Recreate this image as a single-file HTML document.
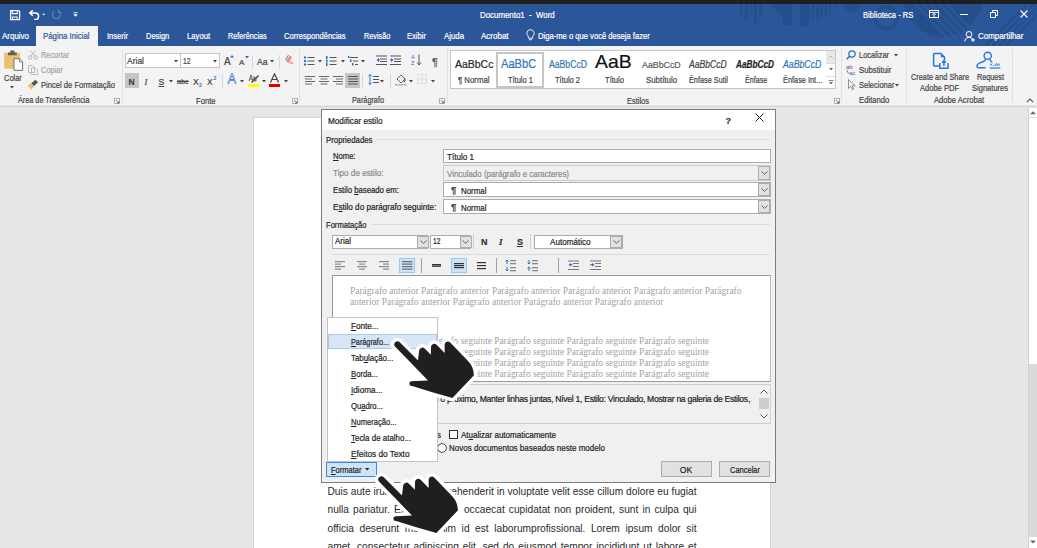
<!DOCTYPE html>
<html><head><meta charset="utf-8"><style>
html,body{margin:0;padding:0;width:1037px;height:548px;overflow:hidden;background:#e6e6e6;}
.t{position:absolute;white-space:nowrap;line-height:1;-webkit-text-stroke:0.2px currentColor;}
.r{position:absolute;}
u{text-decoration:underline;text-underline-offset:1px;}
</style></head><body>
<div class="r" style="left:0px;top:0px;width:1037px;height:4px;background:#1f1f1f;"></div>
<div class="r" style="left:0px;top:4px;width:1037px;height:42px;background:#2b579a;"></div>
<svg class="r" style="left:720px;top:4px;" width="317" height="42" viewBox="0 0 317 42">
<g fill="#254e8d">
<rect x="20" y="0" width="2.5" height="10"/><rect x="24.7" y="0" width="3" height="15"/><rect x="30" y="0" width="1.6" height="10.7"/>
<rect x="34" y="0" width="3" height="20.7"/><rect x="39" y="0" width="2.7" height="13.7"/>
<path d="M51.7 0 L63 0 L63 21.5 L71.8 21.5 L71.8 0 L63 0 L63 14 Z"/>
<rect x="79.5" y="0" width="10" height="22.5" rx="4"/>
<path d="M91.8 0 h2.2 v17 h-2.2z M96.4 0 h2.4 v16 h-2.4z M100 0 h2.6 v14 h-2.6z M105 0 h2 v12 h-2z M109.6 0 h1.4 v10 h-1.4z M114 0 h1.7 v6 h-1.7z"/>
<circle cx="132" cy="-2" r="9.6"/>
</g>
<g fill="none" stroke="#254e8d" stroke-width="4">
<circle cx="166" cy="13.7" r="11"/>
</g>
<circle cx="223" cy="-7" r="40" fill="#254e8d"/>
<g stroke="#2d5b9f" stroke-width="1.6">
<path d="M195 0 L235 42 M203 0 L243 42 M211 0 L251 42 M219 0 L259 42 M227 0 L267 42"/>
</g>
<g stroke="#254e8d" stroke-width="2.2">
<path d="M265 42 L307 0 M272 42 L314 0 M279 42 L321 0 M286 42 L328 0"/>
</g>
</svg>
<svg class="r" style="left:9px;top:9px;" width="12" height="12" viewBox="0 0 12 12"><path d="M1.6 1.6 h8.2 l0.8 0.8 v8.2 h-9z" fill="none" stroke="#fff" stroke-width="1.3" stroke-linejoin="round"/><path d="M3.3 1.6 v3 h5 v-3 M3.6 10.6 v-2.6 h4.6 v2.6" fill="none" stroke="#fff" stroke-width="1.1"/></svg>
<svg class="r" style="left:28px;top:9px;" width="18" height="11" viewBox="0 0 18 11"><path d="M2.3 4 h5 a3.3 3.3 0 0 1 0 6.6 h-1.2 M4.8 1.2 L1.8 4 L4.8 6.8" fill="none" stroke="#fff" stroke-width="1.5"/><path d="M14.3 4.8 h3 l-1.5 1.7z" fill="#fff"/></svg>
<svg class="r" style="left:51px;top:9px;" width="11" height="11" viewBox="0 0 11 11"><path d="M3 2.5 a4 4 0 1 0 5 0 M7.5 0.5 v3 h3" fill="none" stroke="#5f84bb" stroke-width="1.2"/></svg>
<svg class="r" style="left:72px;top:11px;" width="7" height="7" viewBox="0 0 7 7"><rect x="1.5" y="1.3" width="4" height="0.9" fill="#fff"/><path d="M1.3 3.3 h4.4 l-2.2 2.4z" fill="#fff"/></svg>
<div class="t" style="top:11.02px;font-size:8.6px;color:#fff;font-weight:normal;font-family:'Liberation Sans',sans-serif;transform:scaleX(0.9164);transform-origin:0 0;left:479.70px;">Documento1 &nbsp;- &nbsp;Word</div>
<div class="t" style="top:10.82px;font-size:8.6px;color:#fff;font-weight:normal;font-family:'Liberation Sans',sans-serif;transform:scaleX(0.8866);transform-origin:0 0;left:862.50px;">Biblioteca - RS</div>
<svg class="r" style="left:929px;top:10px;" width="10" height="8" viewBox="0 0 10 8"><rect x="0.5" y="0.5" width="9" height="7" fill="none" stroke="#fff"/><path d="M0.5 2.5 h9 M5 7 v-3.5 M3.3 5 L5 3.3 L6.7 5" fill="none" stroke="#fff" stroke-width="0.9"/></svg>
<div class="r" style="left:960px;top:13.5px;width:8px;height:1px;background:#fff;"></div>
<svg class="r" style="left:990px;top:10px;" width="8" height="8" viewBox="0 0 8 8"><path d="M0.5 2.5 h5 v5 h-5z M2.5 2.5 v-2 h5 v5 h-2" fill="none" stroke="#fff"/></svg>
<svg class="r" style="left:1020px;top:10px;" width="8" height="8" viewBox="0 0 8 8"><path d="M0.5 0.5 L7.5 7.5 M7.5 0.5 L0.5 7.5" stroke="#fff" stroke-width="1.1"/></svg>
<div class="r" style="left:36px;top:26px;width:62px;height:20px;background:#f3f3f3;"></div>
<div class="t" style="top:32.22px;font-size:8.6px;color:#fff;font-weight:normal;font-family:'Liberation Sans',sans-serif;transform:scaleX(0.9265);transform-origin:0 0;left:1.50px;">Arquivo</div>
<div class="t" style="top:32.22px;font-size:8.6px;color:#2b579a;font-weight:normal;font-family:'Liberation Sans',sans-serif;transform:scaleX(0.9095);transform-origin:0 0;left:42.80px;">Página Inicial</div>
<div class="t" style="top:32.22px;font-size:8.6px;color:#fff;font-weight:normal;font-family:'Liberation Sans',sans-serif;transform:scaleX(0.8790);transform-origin:0 0;left:106.70px;">Inserir</div>
<div class="t" style="top:32.22px;font-size:8.6px;color:#fff;font-weight:normal;font-family:'Liberation Sans',sans-serif;transform:scaleX(0.8668);transform-origin:0 0;left:145.50px;">Design</div>
<div class="t" style="top:32.22px;font-size:8.6px;color:#fff;font-weight:normal;font-family:'Liberation Sans',sans-serif;transform:scaleX(0.8988);transform-origin:0 0;left:186.80px;">Layout</div>
<div class="t" style="top:32.22px;font-size:8.6px;color:#fff;font-weight:normal;font-family:'Liberation Sans',sans-serif;transform:scaleX(0.8439);transform-origin:0 0;left:227.70px;">Referências</div>
<div class="t" style="top:32.22px;font-size:8.6px;color:#fff;font-weight:normal;font-family:'Liberation Sans',sans-serif;transform:scaleX(0.8832);transform-origin:0 0;left:284.40px;">Correspondências</div>
<div class="t" style="top:32.22px;font-size:8.6px;color:#fff;font-weight:normal;font-family:'Liberation Sans',sans-serif;transform:scaleX(0.8435);transform-origin:0 0;left:363.80px;">Revisão</div>
<div class="t" style="top:32.22px;font-size:8.6px;color:#fff;font-weight:normal;font-family:'Liberation Sans',sans-serif;transform:scaleX(0.8837);transform-origin:0 0;left:407.30px;">Exibir</div>
<div class="t" style="top:32.22px;font-size:8.6px;color:#fff;font-weight:normal;font-family:'Liberation Sans',sans-serif;transform:scaleX(0.9097);transform-origin:0 0;left:444.00px;">Ajuda</div>
<div class="t" style="top:32.22px;font-size:8.6px;color:#fff;font-weight:normal;font-family:'Liberation Sans',sans-serif;transform:scaleX(0.9316);transform-origin:0 0;left:481.40px;">Acrobat</div>
<div class="t" style="top:32.22px;font-size:8.6px;color:#fff;font-weight:normal;font-family:'Liberation Sans',sans-serif;transform:scaleX(0.8864);transform-origin:0 0;left:538.20px;">Diga-me o que você deseja fazer</div>
<svg class="r" style="left:526px;top:29px;" width="9" height="12" viewBox="0 0 9 12"><path d="M4.5 0.7 a3.6 3.6 0 0 0 -2.2 6.5 v2 h4.4 v-2 a3.6 3.6 0 0 0 -2.2 -6.5z M3 10.7 h3" fill="none" stroke="#fff" stroke-width="0.9"/></svg>
<svg class="r" style="left:964px;top:31px;" width="12" height="11" viewBox="0 0 12 11"><circle cx="5" cy="3.3" r="2.8" fill="none" stroke="#fff"/><path d="M0.6 10.5 a4.5 4.5 0 0 1 8.6 -1.5 M9 7 v4 M7 9 h4" fill="none" stroke="#fff"/></svg>
<div class="t" style="top:32.02px;font-size:8.6px;color:#fff;font-weight:normal;font-family:'Liberation Sans',sans-serif;transform:scaleX(0.9227);transform-origin:0 0;left:978.00px;">Compartilhar</div>
<div class="r" style="left:0px;top:46px;width:1037px;height:60px;background:#f3f3f3;"></div>
<div class="r" style="left:0px;top:105px;width:1037px;height:1px;background:#e6e6e6;"></div>
<div class="r" style="left:0px;top:106px;width:1037px;height:1px;background:#d5d5d5;"></div>
<div class="r" style="left:122px;top:49px;width:1px;height:53px;background:#e1e1e1;"></div>
<div class="r" style="left:299px;top:49px;width:1px;height:53px;background:#e1e1e1;"></div>
<div class="r" style="left:447px;top:49px;width:1px;height:53px;background:#e1e1e1;"></div>
<div class="r" style="left:841px;top:49px;width:1px;height:53px;background:#e1e1e1;"></div>
<div class="r" style="left:906px;top:49px;width:1px;height:53px;background:#e1e1e1;"></div>
<div class="r" style="left:1012px;top:49px;width:1px;height:53px;background:#e1e1e1;"></div>
<svg class="r" style="left:114px;top:97.5px;" width="6" height="6" viewBox="0 0 6 6"><path d="M0.5 5.5 v-5 h5 v5z" fill="none" stroke="#9a9a9a" stroke-width="0.8"/><path d="M2 2 L5 5 M5 3 v2 h-2" fill="none" stroke="#666" stroke-width="0.8"/></svg>
<svg class="r" style="left:292px;top:97.5px;" width="6" height="6" viewBox="0 0 6 6"><path d="M0.5 5.5 v-5 h5 v5z" fill="none" stroke="#9a9a9a" stroke-width="0.8"/><path d="M2 2 L5 5 M5 3 v2 h-2" fill="none" stroke="#666" stroke-width="0.8"/></svg>
<svg class="r" style="left:438.5px;top:97.5px;" width="6" height="6" viewBox="0 0 6 6"><path d="M0.5 5.5 v-5 h5 v5z" fill="none" stroke="#9a9a9a" stroke-width="0.8"/><path d="M2 2 L5 5 M5 3 v2 h-2" fill="none" stroke="#666" stroke-width="0.8"/></svg>
<svg class="r" style="left:833.5px;top:97.5px;" width="6" height="6" viewBox="0 0 6 6"><path d="M0.5 5.5 v-5 h5 v5z" fill="none" stroke="#9a9a9a" stroke-width="0.8"/><path d="M2 2 L5 5 M5 3 v2 h-2" fill="none" stroke="#666" stroke-width="0.8"/></svg>
<svg class="r" style="left:3px;top:49px;" width="22" height="23" viewBox="0 0 22 23"><rect x="1.2" y="3.7" width="15.9" height="15.9" fill="#e8c070"/><path d="M5 3.4 h8.8 v2.8 h-8.8z M7.3 1.6 h4.2 v2 h-4.2z" fill="#5f5f5f"/><path d="M10.9 9.7 h5.6 l3.1 3.1 v8.5 h-8.7z" fill="#fff" stroke="#707070" stroke-width="1"/><path d="M16.3 9.7 v3.2 h3.2" fill="none" stroke="#707070" stroke-width="0.8"/></svg>
<div class="t" style="top:73.62px;font-size:8.6px;color:#444444;font-weight:normal;font-family:'Liberation Sans',sans-serif;transform:scaleX(0.8663);transform-origin:0 0;left:3.50px;">Colar</div>
<svg class="r" style="left:10px;top:86.4px;" width="5" height="3" viewBox="0 0 5 3"><path d="M0 0 h4 l-2 2.4z" fill="#444"/></svg>
<svg class="r" style="left:28px;top:50px;" width="10" height="10" viewBox="0 0 10 10"><circle cx="2.2" cy="7.5" r="1.7" fill="none" stroke="#b5b5b5"/><circle cx="7.8" cy="7.5" r="1.7" fill="none" stroke="#b5b5b5"/><path d="M2.8 6 L8 0.5 M7.2 6 L2 0.5" stroke="#b5b5b5"/></svg>
<div class="t" style="top:51.12px;font-size:8.6px;color:#a6a6a6;font-weight:normal;font-family:'Liberation Sans',sans-serif;transform:scaleX(0.8588);transform-origin:0 0;left:40.70px;">Recortar</div>
<svg class="r" style="left:28px;top:65px;" width="10" height="10" viewBox="0 0 10 10"><path d="M0.5 0.5 h4 l2 2 v5 h-6z M3.5 3 h4 l2 2 v4.5 h-6z" fill="#f1f1f1" stroke="#b5b5b5" stroke-width="0.9"/></svg>
<div class="t" style="top:66.22px;font-size:8.6px;color:#a6a6a6;font-weight:normal;font-family:'Liberation Sans',sans-serif;transform:scaleX(0.8686);transform-origin:0 0;left:40.70px;">Copiar</div>
<svg class="r" style="left:27px;top:79px;" width="12" height="11" viewBox="0 0 12 11"><path d="M0.5 7 L4.5 10.5 L7.3 7.3 L3.6 4z" fill="#e8c070"/><path d="M4.3 4.3 L8.5 0.8 L11 3.3 L7.2 7z" fill="#555"/></svg>
<div class="t" style="top:81.22px;font-size:8.6px;color:#444444;font-weight:normal;font-family:'Liberation Sans',sans-serif;transform:scaleX(0.8852);transform-origin:0 0;left:40.70px;">Pincel de Formatação</div>
<div class="t" style="top:96.22px;font-size:8.6px;color:#444444;font-weight:normal;font-family:'Liberation Sans',sans-serif;transform:scaleX(0.8455);transform-origin:0 0;left:17.50px;">Área de Transferência</div>
<div class="r" style="left:125px;top:53px;width:56px;height:15px;background:#fff;box-sizing:border-box;border:1px solid #c6c6c6;"></div>
<div class="r" style="left:180px;top:53px;width:40px;height:15px;background:#fff;box-sizing:border-box;border:1px solid #c6c6c6;"></div>
<div class="t" style="top:56.82px;font-size:8.6px;color:#444;font-weight:normal;font-family:'Liberation Sans',sans-serif;transform:scaleX(0.9882);transform-origin:0 0;left:127.30px;">Arial</div>
<div class="t" style="top:56.82px;font-size:8.6px;color:#444;font-weight:normal;font-family:'Liberation Sans',sans-serif;transform:scaleX(0.7843);transform-origin:0 0;left:182.80px;">12</div>
<svg class="r" style="left:173.6px;top:59.5px;" width="5" height="3" viewBox="0 0 5 3"><path d="M0 0 h4 l-2 2.4z" fill="#444"/></svg>
<svg class="r" style="left:213px;top:59.5px;" width="5" height="3" viewBox="0 0 5 3"><path d="M0 0 h4 l-2 2.4z" fill="#444"/></svg>
<div class="t" style="top:57.44px;font-size:10px;color:#444;font-weight:normal;font-family:'Liberation Sans',sans-serif;left:224.00px;">A</div>
<svg class="r" style="left:230px;top:55px;" width="4" height="3" viewBox="0 0 4 3"><path d="M0 2.5 L2 0 L4 2.5z" fill="#2b6cc4"/></svg>
<div class="t" style="top:59.13px;font-size:8px;color:#444;font-weight:normal;font-family:'Liberation Sans',sans-serif;left:239.00px;">A</div>
<svg class="r" style="left:245px;top:56px;" width="4" height="3" viewBox="0 0 4 3"><path d="M0 0 L2 2.5 L4 0z" fill="#2b6cc4"/></svg>
<div class="r" style="left:252px;top:55px;width:1px;height:13px;background:#d5d5d5;"></div>
<div class="t" style="top:58.20px;font-size:8.5px;color:#444;font-weight:normal;font-family:'Liberation Sans',sans-serif;transform:scaleX(1.0186);transform-origin:0 0;left:257.00px;">Aa</div>
<svg class="r" style="left:269.6px;top:60px;" width="5" height="3" viewBox="0 0 5 3"><path d="M0 0 h4 l-2 2.4z" fill="#444"/></svg>
<div class="r" style="left:279px;top:55px;width:1px;height:13px;background:#d5d5d5;"></div>
<svg class="r" style="left:285px;top:54px;" width="10" height="11" viewBox="0 0 10 11"><path d="M1 7 L5 1.5 L7 3 L3.5 9z" fill="#e88" /><path d="M5 6 L9 9.5 L6 10.5 L3.5 8z" fill="#f4a9b1"/><path d="M0.5 6 l3 -5" stroke="#555" stroke-width="0.8"/></svg>
<div class="r" style="left:125px;top:73px;width:14px;height:15px;background:#c5c5c5;"></div>
<div class="t" style="top:78.00px;font-size:8.5px;color:#444;font-weight:bold;font-family:'Liberation Sans',sans-serif;left:128.50px;">N</div>
<div class="t" style="top:78.00px;font-size:8.5px;color:#444;font-weight:normal;font-family:'Liberation Sans',sans-serif;font-style:italic;left:144.50px;font-family:'Liberation Serif';">I</div>
<div class="t" style="top:78.00px;font-size:8.5px;color:#444;font-weight:normal;font-family:'Liberation Sans',sans-serif;left:158.50px;"><u>S</u></div>
<svg class="r" style="left:169px;top:80px;" width="5" height="3" viewBox="0 0 5 3"><path d="M0 0 h4 l-2 2.4z" fill="#444"/></svg>
<div class="t" style="top:78.43px;font-size:8px;color:#444;font-weight:normal;font-family:'Liberation Sans',sans-serif;transform:scaleX(0.8988);transform-origin:0 0;left:177.00px;text-decoration:line-through;">abc</div>
<div class="t" style="top:78.00px;font-size:8.5px;color:#444;font-weight:normal;font-family:'Liberation Sans',sans-serif;left:193.00px;">X</div>
<div class="t" style="top:82.67px;font-size:5px;color:#2b6cc4;font-weight:normal;font-family:'Liberation Sans',sans-serif;left:199.00px;">2</div>
<div class="t" style="top:78.00px;font-size:8.5px;color:#444;font-weight:normal;font-family:'Liberation Sans',sans-serif;left:207.00px;">X</div>
<div class="t" style="top:75.67px;font-size:5px;color:#2b6cc4;font-weight:normal;font-family:'Liberation Sans',sans-serif;left:213.50px;">2</div>
<div class="r" style="left:222px;top:74px;width:1px;height:13px;background:#d5d5d5;"></div>
<svg class="r" style="left:227px;top:73px;" width="10" height="12" viewBox="0 0 10 12"><path d="M1 11 L5 1 L9 11 M2.8 7 h4.4" fill="none" stroke="#2b6cc4" stroke-width="1.6"/><path d="M1 11 L5 1 L9 11" fill="none" stroke="#fff" stroke-width="0.5"/></svg>
<svg class="r" style="left:239.5px;top:80px;" width="5" height="3" viewBox="0 0 5 3"><path d="M0 0 h4 l-2 2.4z" fill="#444"/></svg>
<svg class="r" style="left:248px;top:73px;" width="12" height="14" viewBox="0 0 12 14"><path d="M1 8 L3 2 L5 8 M1.8 6 h2.5 M6 8 v-5 M6 5 h2 v3 h-2" fill="none" stroke="#444" stroke-width="0.8"/><path d="M3 9 L10 2 L11 3 L4 10z" fill="#444"/><rect x="0" y="11" width="11" height="3" fill="#ffff00"/></svg>
<svg class="r" style="left:262px;top:80px;" width="5" height="3" viewBox="0 0 5 3"><path d="M0 0 h4 l-2 2.4z" fill="#444"/></svg>
<svg class="r" style="left:269px;top:73px;" width="12" height="14" viewBox="0 0 12 14"><path d="M1.5 9.5 L5.5 0.8 L9.5 9.5 M3 6.5 h5" fill="none" stroke="#444" stroke-width="1.2"/><rect x="0" y="11" width="11" height="3" fill="#e00000"/></svg>
<svg class="r" style="left:284px;top:80px;" width="5" height="3" viewBox="0 0 5 3"><path d="M0 0 h4 l-2 2.4z" fill="#444"/></svg>
<div class="t" style="top:96.62px;font-size:8.6px;color:#444444;font-weight:normal;font-family:'Liberation Sans',sans-serif;transform:scaleX(0.8870);transform-origin:0 0;left:195.50px;">Fonte</div>
<svg class="r" style="left:304px;top:56px;" width="11" height="10" viewBox="0 0 11 10"><rect x="0" y="0.5" width="2" height="2" fill="#2b6cc4"/><rect x="0" y="4" width="2" height="2" fill="#2b6cc4"/><rect x="0" y="7.5" width="2" height="2" fill="#2b6cc4"/><rect x="3.5" y="1" width="7" height="1" fill="#555"/><rect x="3.5" y="4.5" width="7" height="1" fill="#555"/><rect x="3.5" y="8" width="7" height="1" fill="#555"/></svg>
<svg class="r" style="left:318px;top:60px;" width="5" height="3" viewBox="0 0 5 3"><path d="M0 0 h4 l-2 2.4z" fill="#444"/></svg>
<svg class="r" style="left:326px;top:56px;" width="11" height="10" viewBox="0 0 11 10"><rect x="0" y="0" width="1.5" height="3" fill="#2b6cc4"/><rect x="0" y="3.5" width="1.5" height="3" fill="#2b6cc4"/><rect x="0" y="7" width="1.5" height="3" fill="#2b6cc4"/><rect x="3.5" y="1" width="7" height="1" fill="#555"/><rect x="3.5" y="4.5" width="7" height="1" fill="#555"/><rect x="3.5" y="8" width="7" height="1" fill="#555"/></svg>
<svg class="r" style="left:340.5px;top:60px;" width="5" height="3" viewBox="0 0 5 3"><path d="M0 0 h4 l-2 2.4z" fill="#444"/></svg>
<svg class="r" style="left:348px;top:56px;" width="12" height="10" viewBox="0 0 12 10"><rect x="0" y="0" width="1.5" height="2" fill="#2b6cc4"/><rect x="2" y="3.5" width="1.5" height="2.5" fill="#2b6cc4"/><rect x="4" y="7" width="1.5" height="2.5" fill="#2b6cc4"/><rect x="2" y="1" width="8" height="1" fill="#555"/><rect x="5" y="4.5" width="5" height="1" fill="#555"/><rect x="7" y="8" width="3" height="1" fill="#555"/></svg>
<svg class="r" style="left:361.4px;top:60px;" width="5" height="3" viewBox="0 0 5 3"><path d="M0 0 h4 l-2 2.4z" fill="#444"/></svg>
<svg class="r" style="left:376px;top:55px;" width="11" height="10" viewBox="0 0 11 10"><rect x="0" y="0.5" width="11" height="1" fill="#555"/><rect x="4" y="3.5" width="7" height="1" fill="#555"/><rect x="4" y="6" width="7" height="1" fill="#555"/><rect x="0" y="9" width="11" height="1" fill="#555"/><path d="M0.5 5 L3 3 v4z" fill="#2b6cc4"/><rect x="2" y="4.5" width="2" height="1" fill="#2b6cc4"/></svg>
<svg class="r" style="left:390px;top:55px;" width="11" height="10" viewBox="0 0 11 10"><rect x="0" y="0.5" width="11" height="1" fill="#555"/><rect x="4" y="3.5" width="7" height="1" fill="#555"/><rect x="4" y="6" width="7" height="1" fill="#555"/><rect x="0" y="9" width="11" height="1" fill="#555"/><path d="M3.5 5 L1 3 v4z" fill="#2b6cc4"/><rect x="0" y="4.5" width="2" height="1" fill="#2b6cc4"/></svg>
<svg class="r" style="left:411px;top:54px;" width="11" height="12" viewBox="0 0 11 12"><text x="0" y="5" font-size="5.5" fill="#2b6cc4" font-family="Liberation Sans">A</text><text x="0" y="11" font-size="5.5" fill="#8040a0" font-family="Liberation Sans">Z</text><path d="M8 0.5 v10 M6 8.5 L8 11 L10 8.5" fill="none" stroke="#444" stroke-width="0.9"/></svg>
<div class="t" style="top:56.59px;font-size:11px;color:#555;font-weight:normal;font-family:'Liberation Sans',sans-serif;left:432.00px;">¶</div>
<svg class="r" style="left:304.6px;top:76px;" width="16" height="11.0" viewBox="0 0 16 11.0"><rect x="0" y="0.0" width="10" height="1" fill="#666"/><rect x="0" y="2.5" width="7" height="1" fill="#666"/><rect x="0" y="5.0" width="10" height="1" fill="#666"/><rect x="0" y="7.5" width="7" height="1" fill="#666"/></svg>
<svg class="r" style="left:319px;top:76px;" width="16" height="11.0" viewBox="0 0 16 11.0"><rect x="0" y="0.0" width="10" height="1" fill="#666"/><rect x="1.5" y="2.5" width="7" height="1" fill="#666"/><rect x="0" y="5.0" width="10" height="1" fill="#666"/><rect x="1.5" y="7.5" width="7" height="1" fill="#666"/></svg>
<svg class="r" style="left:333px;top:76px;" width="16" height="11.0" viewBox="0 0 16 11.0"><rect x="0" y="0.0" width="10" height="1" fill="#666"/><rect x="3" y="2.5" width="7" height="1" fill="#666"/><rect x="0" y="5.0" width="10" height="1" fill="#666"/><rect x="3" y="7.5" width="7" height="1" fill="#666"/></svg>
<div class="r" style="left:345px;top:73px;width:15px;height:15px;background:#c5c5c5;"></div>
<svg class="r" style="left:347.5px;top:76px;" width="16" height="11.0" viewBox="0 0 16 11.0"><rect x="0" y="0.0" width="10" height="1" fill="#555"/><rect x="0" y="2.5" width="10" height="1" fill="#555"/><rect x="0" y="5.0" width="10" height="1" fill="#555"/><rect x="0" y="7.5" width="10" height="1" fill="#555"/></svg>
<div class="r" style="left:362px;top:74px;width:1px;height:13px;background:#d5d5d5;"></div>
<svg class="r" style="left:368px;top:74px;" width="11" height="12" viewBox="0 0 11 12"><path d="M2 0.5 v10 M0.3 2.3 L2 0.5 L3.7 2.3 M0.3 8.7 L2 10.5 L3.7 8.7" fill="none" stroke="#2b6cc4" stroke-width="0.9"/><rect x="5" y="2" width="6" height="1" fill="#555"/><rect x="5" y="5" width="6" height="1" fill="#555"/><rect x="5" y="8" width="6" height="1" fill="#555"/></svg>
<svg class="r" style="left:380px;top:80px;" width="5" height="3" viewBox="0 0 5 3"><path d="M0 0 h4 l-2 2.4z" fill="#444"/></svg>
<div class="r" style="left:390px;top:74px;width:1px;height:13px;background:#d5d5d5;"></div>
<svg class="r" style="left:395px;top:73px;" width="12" height="13" viewBox="0 0 12 13"><path d="M2 6 L6 2 L10 6 L6 10z" fill="#f1f1f1" stroke="#555" stroke-width="0.9"/><path d="M9 5 q2 2 0 4" fill="none" stroke="#2b6cc4" stroke-width="1.2"/><rect x="0" y="11.5" width="11" height="1.5" fill="none" stroke="#999" stroke-width="0.6"/></svg>
<svg class="r" style="left:408.7px;top:80px;" width="5" height="3" viewBox="0 0 5 3"><path d="M0 0 h4 l-2 2.4z" fill="#444"/></svg>
<svg class="r" style="left:417px;top:74px;" width="10" height="10" viewBox="0 0 10 10"><path d="M0.5 0.5 h9 v9 h-9z M5 0.5 v9 M0.5 5 h9" fill="none" stroke="#c9c9c9" stroke-width="0.9" stroke-dasharray="1 1"/></svg>
<svg class="r" style="left:430.8px;top:80px;" width="5" height="3" viewBox="0 0 5 3"><path d="M0 0 h4 l-2 2.4z" fill="#444"/></svg>
<div class="t" style="top:96.02px;font-size:8.6px;color:#444444;font-weight:normal;font-family:'Liberation Sans',sans-serif;transform:scaleX(0.8477);transform-origin:0 0;left:351.80px;">Parágrafo</div>
<div class="r" style="left:450px;top:50px;width:386px;height:39px;background:#fff;box-sizing:border-box;border:1px solid #c6c6c6;"></div>
<div class="r" style="left:496px;top:51.5px;width:47.5px;height:36px;background:none;box-sizing:border-box;border:2px solid #c6c6c6;"></div>
<div class="r" style="left:826px;top:51px;width:9px;height:37px;background:#fff;"></div>
<div class="r" style="left:826px;top:51px;width:9px;height:12px;background:#e8e8e8;"></div>
<div class="r" style="left:826px;top:63px;width:9px;height:1px;background:#dcdcdc;"></div>
<div class="r" style="left:826px;top:76px;width:9px;height:1px;background:#dcdcdc;"></div>
<svg class="r" style="left:828.5px;top:68px;" width="5" height="3" viewBox="0 0 5 3"><path d="M0 0 h4 l-2 2.4z" fill="#666"/></svg>
<svg class="r" style="left:828px;top:80px;" width="6" height="5" viewBox="0 0 6 5"><path d="M0.5 0.5 h5" stroke="#666" stroke-width="0.8"/><path d="M1 2 h4 l-2 2.4z" fill="#666"/></svg>
<svg class="r" style="left:828px;top:55px;" width="6" height="4" viewBox="0 0 6 4"><path d="M0.5 3.5 L3 1 L5.5 3.5" fill="none" stroke="#bbb"/></svg>
<div class="t" style="top:59.17px;font-size:11.5px;color:#222;font-weight:normal;font-family:'Liberation Sans',sans-serif;transform:scaleX(0.9102);transform-origin:0 0;left:454.60px;">AaBbCc</div>
<div class="t" style="top:76.22px;font-size:8.6px;color:#444444;font-weight:normal;font-family:'Liberation Sans',sans-serif;transform:scaleX(0.9077);transform-origin:0 0;left:457.50px;">¶ Normal</div>
<div class="t" style="top:58.32px;font-size:12.5px;color:#2e74b5;font-weight:normal;font-family:'Liberation Sans',sans-serif;transform:scaleX(0.8908);transform-origin:0 0;left:501.00px;width:39px;overflow:hidden;">AaBbC(</div>
<div class="t" style="top:76.22px;font-size:8.6px;color:#444444;font-weight:normal;font-family:'Liberation Sans',sans-serif;transform:scaleX(0.8650);transform-origin:0 0;left:508.00px;">Título 1</div>
<div class="t" style="top:60.44px;font-size:10px;color:#2e74b5;font-weight:normal;font-family:'Liberation Sans',sans-serif;transform:scaleX(0.8655);transform-origin:0 0;left:548.80px;">AaBbCcD</div>
<div class="t" style="top:76.22px;font-size:8.6px;color:#444444;font-weight:normal;font-family:'Liberation Sans',sans-serif;transform:scaleX(0.8719);transform-origin:0 0;left:555.00px;">Título 2</div>
<div class="t" style="top:53.24px;font-size:18.5px;color:#111;font-weight:normal;font-family:'Liberation Sans',sans-serif;transform:scaleX(1.0466);transform-origin:0 0;left:595.40px;">AaB</div>
<div class="t" style="top:76.22px;font-size:8.6px;color:#444444;font-weight:normal;font-family:'Liberation Sans',sans-serif;transform:scaleX(0.8837);transform-origin:0 0;left:605.00px;">Título</div>
<div class="t" style="top:60.61px;font-size:9.2px;color:#5a5a5a;font-weight:normal;font-family:'Liberation Sans',sans-serif;transform:scaleX(0.9593);transform-origin:0 0;left:642.30px;">AaBbCcD</div>
<div class="t" style="top:76.22px;font-size:8.6px;color:#444444;font-weight:normal;font-family:'Liberation Sans',sans-serif;transform:scaleX(0.9139);transform-origin:0 0;left:646.00px;">Subtítulo</div>
<div class="t" style="top:60.44px;font-size:10px;color:#404040;font-weight:normal;font-family:'Liberation Sans',sans-serif;font-style:italic;transform:scaleX(0.8564);transform-origin:0 0;left:689.40px;">AaBbCcD</div>
<div class="t" style="top:76.22px;font-size:8.6px;color:#444444;font-weight:normal;font-family:'Liberation Sans',sans-serif;transform:scaleX(0.8501);transform-origin:0 0;left:689.00px;">Ênfase Sutil</div>
<div class="t" style="top:60.44px;font-size:10px;color:#222;font-weight:bold;font-family:'Liberation Sans',sans-serif;font-style:italic;transform:scaleX(0.8238);transform-origin:0 0;left:736.00px;">AaBbCcD</div>
<div class="t" style="top:76.22px;font-size:8.6px;color:#444444;font-weight:normal;font-family:'Liberation Sans',sans-serif;transform:scaleX(0.8332);transform-origin:0 0;left:744.50px;">Ênfase</div>
<div class="t" style="top:60.44px;font-size:10px;color:#2e74b5;font-weight:normal;font-family:'Liberation Sans',sans-serif;font-style:italic;transform:scaleX(0.8723);transform-origin:0 0;left:782.70px;">AaBbCcD</div>
<div class="t" style="top:76.22px;font-size:8.6px;color:#444444;font-weight:normal;font-family:'Liberation Sans',sans-serif;transform:scaleX(0.8567);transform-origin:0 0;left:782.70px;">Ênfase Int...</div>
<div class="t" style="top:96.52px;font-size:8.6px;color:#444444;font-weight:normal;font-family:'Liberation Sans',sans-serif;transform:scaleX(0.8691);transform-origin:0 0;left:627.30px;">Estilos</div>
<svg class="r" style="left:846px;top:50px;" width="10" height="10" viewBox="0 0 10 10"><circle cx="6" cy="4" r="3.2" fill="none" stroke="#2b6cc4" stroke-width="1.2"/><path d="M3.6 6.4 L0.7 9.3" stroke="#2b6cc4" stroke-width="1.5"/></svg>
<div class="t" style="top:51.12px;font-size:8.6px;color:#444444;font-weight:normal;font-family:'Liberation Sans',sans-serif;transform:scaleX(0.8748);transform-origin:0 0;left:858.60px;">Localizar</div>
<svg class="r" style="left:894.4px;top:53.5px;" width="5" height="3" viewBox="0 0 5 3"><path d="M0 0 h4 l-2 2.4z" fill="#444"/></svg>
<svg class="r" style="left:846px;top:64px;" width="11" height="11" viewBox="0 0 11 11"><text x="0" y="5" font-size="6" fill="#8040a0" font-family="Liberation Sans">ab</text><text x="3.5" y="10.5" font-size="5.5" fill="#2b6cc4" font-family="Liberation Sans">ac</text><path d="M1 6 q0 3 2.5 3.5" fill="none" stroke="#2b6cc4" stroke-width="0.8"/></svg>
<div class="t" style="top:66.22px;font-size:8.6px;color:#444444;font-weight:normal;font-family:'Liberation Sans',sans-serif;transform:scaleX(0.9043);transform-origin:0 0;left:858.60px;">Substituir</div>
<svg class="r" style="left:848px;top:79px;" width="8" height="11" viewBox="0 0 8 11"><path d="M0.5 0.5 v9 l2.3 -2.2 l1.6 3.4 l1.3 -0.6 l-1.6 -3.3 h3.2z" fill="#f1f1f1" stroke="#777" stroke-width="0.8"/></svg>
<div class="t" style="top:81.02px;font-size:8.6px;color:#444444;font-weight:normal;font-family:'Liberation Sans',sans-serif;transform:scaleX(0.8717);transform-origin:0 0;left:858.60px;">Selecionar</div>
<svg class="r" style="left:895px;top:83.5px;" width="5" height="3" viewBox="0 0 5 3"><path d="M0 0 h4 l-2 2.4z" fill="#444"/></svg>
<div class="t" style="top:96.12px;font-size:8.6px;color:#444444;font-weight:normal;font-family:'Liberation Sans',sans-serif;transform:scaleX(0.8958);transform-origin:0 0;left:858.60px;">Editando</div>
<svg class="r" style="left:930px;top:50px;" width="22" height="22" viewBox="0 0 22 22"><path d="M9.5 16 H4.6 Q3.6 16 3.6 15 V4.5 Q3.6 3.5 4.6 3.5 H10.8 L14.5 7.2 V10.5" fill="none" stroke="#1f78e0" stroke-width="1.5"/><path d="M10.8 3.5 V7.2 H14.5z" fill="#1f78e0"/><path d="M9.8 13 V18.2 H18 V13 M13.9 16 V11 M12 12.8 L13.9 10.9 L15.8 12.8" fill="none" stroke="#1f78e0" stroke-width="1.5"/></svg>
<div class="t" style="top:73.32px;font-size:8.6px;color:#444444;font-weight:normal;font-family:'Liberation Sans',sans-serif;transform:scaleX(0.8549);transform-origin:0 0;left:910.70px;">Create and Share</div>
<div class="t" style="top:83.92px;font-size:8.6px;color:#444444;font-weight:normal;font-family:'Liberation Sans',sans-serif;transform:scaleX(0.8776);transform-origin:0 0;left:920.00px;">Adobe PDF</div>
<svg class="r" style="left:970px;top:50px;" width="34" height="22" viewBox="0 0 34 22"><circle cx="17.7" cy="5.8" r="3.6" fill="none" stroke="#1f78e0" stroke-width="1.4"/><path d="M15.6 9.3 Q15 11.3 11.3 12.4 Q7.3 13.6 6.9 15.8 Q6.8 17.7 8.8 17.8 H15.5 M19.8 9.3 Q20.2 11 22.2 12.2" fill="none" stroke="#1f78e0" stroke-width="1.4"/><path d="M20.2 13.5 l2 2 M22.2 13.5 l-2 2 M25.2 15.8 l1.1 -2.3 l1.1 2.3 l1.1 -2.3 l1.1 2.3" fill="none" stroke="#1f78e0" stroke-width="0.9"/><rect x="23.5" y="15" width="0.9" height="0.9" fill="#1f78e0"/><rect x="19.8" y="17.4" width="10.5" height="1.2" fill="#1f78e0"/></svg>
<div class="t" style="top:73.32px;font-size:8.6px;color:#444444;font-weight:normal;font-family:'Liberation Sans',sans-serif;transform:scaleX(0.8433);transform-origin:0 0;left:976.80px;">Request</div>
<div class="t" style="top:83.92px;font-size:8.6px;color:#444444;font-weight:normal;font-family:'Liberation Sans',sans-serif;transform:scaleX(0.8785);transform-origin:0 0;left:971.60px;">Signatures</div>
<div class="t" style="top:96.12px;font-size:8.6px;color:#444444;font-weight:normal;font-family:'Liberation Sans',sans-serif;transform:scaleX(0.8884);transform-origin:0 0;left:934.40px;">Adobe Acrobat</div>
<svg class="r" style="left:1026px;top:98px;" width="8" height="5" viewBox="0 0 8 5"><path d="M0.8 4.2 L4 1 L7.2 4.2" fill="none" stroke="#555" stroke-width="1.1"/></svg>
<div class="r" style="left:0px;top:107px;width:1037px;height:441px;background:#e6e6e6;"></div>
<div class="r" style="left:253px;top:117px;width:518px;height:431px;background:#ffffff;box-sizing:border-box;border:1px solid #d4d4d4;border-bottom:none;"></div>
<div class="r" style="left:1028px;top:108px;width:9px;height:440px;background:#dadada;"></div>
<div class="r" style="left:1028px;top:108px;width:1px;height:440px;background:#d0d0d0;"></div>
<div class="r" style="left:1029px;top:108px;width:8px;height:257px;background:#ffffff;"></div>
<div class="r" style="left:1029px;top:364px;width:8px;height:1px;background:#d8d8d8;"></div>
<div class="r" style="left:1029px;top:117px;width:8px;height:1px;background:#dcdcdc;"></div>
<svg class="r" style="left:1030px;top:110.5px;" width="6" height="4" viewBox="0 0 6 4"><path d="M0 3.2 L3 0.3 L6 3.2z" fill="#666"/></svg>
<div class="r" style="left:1029px;top:536px;width:8px;height:12px;background:#ffffff;"></div>
<div class="r" style="left:1029px;top:536px;width:8px;height:1px;background:#dcdcdc;"></div>
<svg class="r" style="left:1030px;top:540px;" width="6" height="4" viewBox="0 0 6 4"><path d="M0 0.5 L3 3.5 L6 0.5z" fill="#666"/></svg>
<div class="t" style="left:327.5px;top:487.17px;width:369px;font-size:10.2px;color:#2a2a2a;-webkit-text-stroke:0;font-family:'Liberation Sans';text-align:justify;text-align-last:justify;">Duis aute irure dolor in reprehenderit in voluptate velit esse cillum dolore eu fugiat</div>
<div class="t" style="left:327.5px;top:505.47px;width:369px;font-size:10.2px;color:#2a2a2a;-webkit-text-stroke:0;font-family:'Liberation Sans';text-align:justify;text-align-last:justify;">nulla pariatur. Excepteur sint occaecat cupidatat non proident, sunt in culpa qui</div>
<div class="t" style="left:327.5px;top:523.77px;width:369px;font-size:10.2px;color:#2a2a2a;-webkit-text-stroke:0;font-family:'Liberation Sans';text-align:justify;text-align-last:justify;">officia deserunt mollit anim id est laborumprofissional. Lorem ipsum dolor sit</div>
<div class="t" style="left:327.5px;top:542.07px;width:369px;font-size:10.2px;color:#2a2a2a;-webkit-text-stroke:0;font-family:'Liberation Sans';text-align:justify;text-align-last:justify;">amet, consectetur adipiscing elit, sed do eiusmod tempor incididunt ut labore et</div>
<div class="r" style="left:321px;top:109px;width:455px;height:374px;background:#f0f0f0;box-sizing:border-box;border:1px solid #7d7d7d;"></div>
<div class="r" style="left:322px;top:110px;width:453px;height:20px;background:#ffffff;"></div>
<div class="t" style="top:116.92px;font-size:8.6px;color:#1e1e1e;font-weight:normal;font-family:'Liberation Sans',sans-serif;transform:scaleX(0.9509);transform-origin:0 0;left:328.00px;">Modificar estilo</div>
<div class="t" style="top:116.78px;font-size:9px;color:#333;font-weight:bold;font-family:'Liberation Sans',sans-serif;left:725.50px;">?</div>
<svg class="r" style="left:755px;top:113px;" width="9" height="9" viewBox="0 0 9 9"><path d="M0.5 0.5 L8.5 8.5 M8.5 0.5 L0.5 8.5" stroke="#222" stroke-width="1"/></svg>
<div class="t" style="top:135.92px;font-size:8.6px;color:#1e1e1e;font-weight:normal;font-family:'Liberation Sans',sans-serif;transform:scaleX(0.9095);transform-origin:0 0;left:326.00px;">Propriedades</div>
<div class="r" style="left:377px;top:139px;width:393px;height:1px;background:#dcdcdc;"></div>
<div class="t" style="top:152.32px;font-size:8.6px;color:#1e1e1e;font-weight:normal;font-family:'Liberation Sans',sans-serif;transform:scaleX(0.8883);transform-origin:0 0;left:332.50px;"><u>N</u>ome:</div>
<div class="t" style="top:169.22px;font-size:8.6px;color:#8a8a8a;font-weight:normal;font-family:'Liberation Sans',sans-serif;transform:scaleX(0.9495);transform-origin:0 0;left:332.50px;">Tipo de estilo:</div>
<div class="t" style="top:186.32px;font-size:8.6px;color:#1e1e1e;font-weight:normal;font-family:'Liberation Sans',sans-serif;transform:scaleX(0.9028);transform-origin:0 0;left:332.50px;">Estilo <u>b</u>aseado em:</div>
<div class="t" style="top:203.22px;font-size:8.6px;color:#1e1e1e;font-weight:normal;font-family:'Liberation Sans',sans-serif;transform:scaleX(0.9451);transform-origin:0 0;left:332.50px;">E<u>s</u>tilo do parágrafo seguinte:</div>
<div class="r" style="left:443px;top:149px;width:328px;height:14px;background:#fff;box-sizing:border-box;border:1px solid #adadad;"></div>
<div class="t" style="top:152.82px;font-size:8.6px;color:#1e1e1e;font-weight:normal;font-family:'Liberation Sans',sans-serif;transform:scaleX(0.9417);transform-origin:0 0;left:447.00px;">Título 1</div>
<div class="r" style="left:443px;top:165px;width:328px;height:16px;background:#f0f0f0;box-sizing:border-box;border:1px solid #cccccc;"></div>
<div class="t" style="top:169.92px;font-size:8.6px;color:#8a8a8a;font-weight:normal;font-family:'Liberation Sans',sans-serif;transform:scaleX(0.9230);transform-origin:0 0;left:446.50px;">Vinculado (parágrafo e caracteres)</div>
<div class="r" style="left:758px;top:166px;width:12px;height:14px;background:#e1e1e1;box-sizing:border-box;border:1px solid #adadad;"></div>
<svg class="r" style="left:760.5px;top:171.0px;" width="7" height="4" viewBox="0 0 7 4"><path d="M0.5 0.5 L3.5 3.3 L6.5 0.5" fill="none" stroke="#555" stroke-width="0.9"/></svg>
<div class="r" style="left:443px;top:182px;width:328px;height:15px;background:#fff;box-sizing:border-box;border:1px solid #adadad;"></div>
<div class="r" style="left:758px;top:183px;width:12px;height:13px;background:#e1e1e1;box-sizing:border-box;border:1px solid #adadad;"></div>
<svg class="r" style="left:760.5px;top:187.5px;" width="7" height="4" viewBox="0 0 7 4"><path d="M0.5 0.5 L3.5 3.3 L6.5 0.5" fill="none" stroke="#555" stroke-width="0.9"/></svg>
<div class="t" style="top:185.36px;font-size:9.5px;color:#444;font-weight:bold;font-family:'Liberation Sans',sans-serif;left:451.00px;">¶</div>
<div class="t" style="top:186.92px;font-size:8.6px;color:#1e1e1e;font-weight:normal;font-family:'Liberation Sans',sans-serif;transform:scaleX(0.9205);transform-origin:0 0;left:460.50px;">Normal</div>
<div class="r" style="left:443px;top:199px;width:328px;height:15px;background:#fff;box-sizing:border-box;border:1px solid #adadad;"></div>
<div class="r" style="left:758px;top:200px;width:12px;height:13px;background:#e1e1e1;box-sizing:border-box;border:1px solid #adadad;"></div>
<svg class="r" style="left:760.5px;top:204.5px;" width="7" height="4" viewBox="0 0 7 4"><path d="M0.5 0.5 L3.5 3.3 L6.5 0.5" fill="none" stroke="#555" stroke-width="0.9"/></svg>
<div class="t" style="top:202.36px;font-size:9.5px;color:#444;font-weight:bold;font-family:'Liberation Sans',sans-serif;left:451.00px;">¶</div>
<div class="t" style="top:203.92px;font-size:8.6px;color:#1e1e1e;font-weight:normal;font-family:'Liberation Sans',sans-serif;transform:scaleX(0.9205);transform-origin:0 0;left:460.50px;">Normal</div>
<div class="t" style="top:220.82px;font-size:8.6px;color:#1e1e1e;font-weight:normal;font-family:'Liberation Sans',sans-serif;transform:scaleX(0.8831);transform-origin:0 0;left:326.00px;">Formatação</div>
<div class="r" style="left:371px;top:224px;width:399px;height:1px;background:#dcdcdc;"></div>
<div class="r" style="left:332px;top:234.5px;width:96px;height:14px;background:#fff;box-sizing:border-box;border:1px solid #adadad;"></div>
<div class="r" style="left:417px;top:235.5px;width:12px;height:12px;background:#e1e1e1;box-sizing:border-box;border:1px solid #adadad;"></div>
<svg class="r" style="left:419.5px;top:239.5px;" width="7" height="4" viewBox="0 0 7 4"><path d="M0.5 0.5 L3.5 3.3 L6.5 0.5" fill="none" stroke="#555" stroke-width="0.9"/></svg>
<div class="t" style="top:237.22px;font-size:8.6px;color:#1e1e1e;font-weight:normal;font-family:'Liberation Sans',sans-serif;transform:scaleX(0.9301);transform-origin:0 0;left:335.00px;">Arial</div>
<div class="r" style="left:430px;top:234.5px;width:41px;height:14px;background:#fff;box-sizing:border-box;border:1px solid #adadad;"></div>
<div class="r" style="left:459.5px;top:235.5px;width:12px;height:12px;background:#e1e1e1;box-sizing:border-box;border:1px solid #adadad;"></div>
<svg class="r" style="left:462.0px;top:239.5px;" width="7" height="4" viewBox="0 0 7 4"><path d="M0.5 0.5 L3.5 3.3 L6.5 0.5" fill="none" stroke="#555" stroke-width="0.9"/></svg>
<div class="t" style="top:237.22px;font-size:8.6px;color:#1e1e1e;font-weight:normal;font-family:'Liberation Sans',sans-serif;transform:scaleX(0.7843);transform-origin:0 0;left:433.00px;">12</div>
<div class="r" style="left:473px;top:234px;width:1px;height:15px;background:#d0d0d0;"></div>
<div class="t" style="top:238.48px;font-size:9px;color:#333;font-weight:bold;font-family:'Liberation Sans',sans-serif;left:481.00px;">N</div>
<div class="t" style="top:238.48px;font-size:9px;color:#333;font-weight:normal;font-family:'Liberation Sans',sans-serif;font-style:italic;left:499.00px;font-family:'Liberation Serif';font-weight:bold;">I</div>
<div class="t" style="top:238.48px;font-size:9px;color:#333;font-weight:bold;font-family:'Liberation Sans',sans-serif;left:517.00px;"><u>S</u></div>
<div class="r" style="left:530px;top:234px;width:1px;height:15px;background:#d0d0d0;"></div>
<div class="r" style="left:534px;top:235px;width:89px;height:14px;background:#fff;box-sizing:border-box;border:1px solid #adadad;"></div>
<div class="r" style="left:610px;top:236px;width:12px;height:12px;background:#e1e1e1;box-sizing:border-box;border:1px solid #adadad;"></div>
<svg class="r" style="left:612.5px;top:240.0px;" width="7" height="4" viewBox="0 0 7 4"><path d="M0.5 0.5 L3.5 3.3 L6.5 0.5" fill="none" stroke="#555" stroke-width="0.9"/></svg>
<div class="t" style="top:237.92px;font-size:8.6px;color:#1e1e1e;font-weight:normal;font-family:'Liberation Sans',sans-serif;transform:scaleX(0.9419);transform-origin:0 0;left:549.50px;">Automático</div>
<div class="r" style="left:332px;top:254px;width:438px;height:1px;background:#dcdcdc;"></div>
<svg class="r" style="left:335px;top:261px;" width="12" height="12" viewBox="0 0 12 12"><rect x="0" y="0.00" width="10" height="1.2" fill="#8a8a8a"/><rect x="0" y="2.50" width="6" height="1.2" fill="#8a8a8a"/><rect x="0" y="5.00" width="10" height="1.2" fill="#8a8a8a"/><rect x="0" y="7.50" width="6" height="1.2" fill="#8a8a8a"/></svg>
<svg class="r" style="left:357px;top:261px;" width="12" height="12" viewBox="0 0 12 12"><rect x="0" y="0.00" width="10" height="1.2" fill="#8a8a8a"/><rect x="2" y="2.50" width="6" height="1.2" fill="#8a8a8a"/><rect x="0" y="5.00" width="10" height="1.2" fill="#8a8a8a"/><rect x="2" y="7.50" width="6" height="1.2" fill="#8a8a8a"/></svg>
<svg class="r" style="left:379px;top:261px;" width="12" height="12" viewBox="0 0 12 12"><rect x="0" y="0.00" width="10" height="1.2" fill="#8a8a8a"/><rect x="4" y="2.50" width="6" height="1.2" fill="#8a8a8a"/><rect x="0" y="5.00" width="10" height="1.2" fill="#8a8a8a"/><rect x="4" y="7.50" width="6" height="1.2" fill="#8a8a8a"/></svg>
<div class="r" style="left:399px;top:258px;width:16px;height:15px;background:#cce4f7;box-sizing:border-box;border:1px solid #99c9ef;"></div>
<svg class="r" style="left:401.5px;top:261px;" width="12" height="12" viewBox="0 0 12 12"><rect x="0" y="0.00" width="10.5" height="1.2" fill="#6e6e6e"/><rect x="0" y="2.50" width="10.5" height="1.2" fill="#6e6e6e"/><rect x="0" y="5.00" width="10.5" height="1.2" fill="#6e6e6e"/><rect x="0" y="7.50" width="10.5" height="1.2" fill="#6e6e6e"/></svg>
<div class="r" style="left:421px;top:258px;width:1px;height:15px;background:#a0a0a0;"></div>
<svg class="r" style="left:432px;top:264px;" width="12" height="5" viewBox="0 0 12 5"><rect x="0" y="0.00" width="9" height="1.3" fill="#333"/><rect x="0" y="1.50" width="9" height="1.3" fill="#333"/></svg>
<div class="r" style="left:451px;top:258px;width:16px;height:15px;background:#cce4f7;box-sizing:border-box;border:1px solid #99c9ef;"></div>
<svg class="r" style="left:454px;top:262.5px;" width="12" height="8" viewBox="0 0 12 8"><rect x="0" y="0.00" width="10" height="1.2" fill="#333"/><rect x="0" y="2.00" width="10" height="1.2" fill="#333"/><rect x="0" y="4.00" width="10" height="1.2" fill="#333"/></svg>
<svg class="r" style="left:477px;top:261.5px;" width="12" height="11" viewBox="0 0 12 11"><rect x="0" y="0.00" width="9" height="1.2" fill="#333"/><rect x="0" y="3.00" width="9" height="1.2" fill="#333"/><rect x="0" y="6.00" width="9" height="1.2" fill="#333"/></svg>
<div class="r" style="left:495.5px;top:258px;width:1px;height:15px;background:#a0a0a0;"></div>
<svg class="r" style="left:505px;top:259px;" width="12" height="13" viewBox="0 0 12 13"><path d="M2 1 v4 M0.5 2.5 L2 1 L3.5 2.5 M2 8 v4 M0.5 10.5 L2 12 L3.5 10.5" fill="none" stroke="#2b6cc4" stroke-width="1"/><rect x="5" y="1" width="6" height="1.3" fill="#888"/><rect x="5" y="4" width="6" height="1.3" fill="#888"/><rect x="5" y="8" width="6" height="1.3" fill="#888"/><rect x="5" y="11" width="6" height="1.3" fill="#888"/></svg>
<svg class="r" style="left:527px;top:259px;" width="12" height="13" viewBox="0 0 12 13"><path d="M2 1 v4 M0.5 3.5 L2 5 L3.5 3.5 M2 8 v4 M0.5 9.5 L2 8 L3.5 9.5" fill="none" stroke="#2b6cc4" stroke-width="1"/><rect x="5" y="1" width="6" height="1.3" fill="#888"/><rect x="5" y="4" width="6" height="1.3" fill="#888"/><rect x="5" y="8" width="6" height="1.3" fill="#888"/><rect x="5" y="11" width="6" height="1.3" fill="#888"/></svg>
<div class="r" style="left:558.4px;top:258px;width:1px;height:15px;background:#a0a0a0;"></div>
<svg class="r" style="left:568px;top:260px;" width="12" height="11" viewBox="0 0 12 11"><rect x="0" y="0.5" width="11" height="1" fill="#777"/><rect x="5" y="3" width="6" height="1" fill="#777"/><rect x="5" y="6" width="6" height="1" fill="#777"/><rect x="0" y="9" width="11" height="1" fill="#777"/><path d="M0.5 4.8 L3 3 v3.6z" fill="#2b6cc4"/><rect x="2" y="4.3" width="2.5" height="1.1" fill="#2b6cc4"/></svg>
<svg class="r" style="left:590px;top:260px;" width="12" height="11" viewBox="0 0 12 11"><rect x="0" y="0.5" width="11" height="1" fill="#777"/><rect x="5" y="3" width="6" height="1" fill="#777"/><rect x="5" y="6" width="6" height="1" fill="#777"/><rect x="0" y="9" width="11" height="1" fill="#777"/><path d="M4.5 4.8 L2 3 v3.6z" fill="#2b6cc4"/><rect x="0" y="4.3" width="2.5" height="1.1" fill="#2b6cc4"/></svg>
<div class="r" style="left:332px;top:275px;width:439px;height:107px;background:#fff;box-sizing:border-box;border:1px solid #9a9a9a;border-right-color:#bdbdbd;"></div>
<div class="t" style="top:287.14px;font-size:9.4px;color:#a3a3a3;font-weight:normal;font-family:'Liberation Serif',sans-serif;transform:scaleX(1.0095);transform-origin:0 0;left:349.50px;-webkit-text-stroke:0;">Parágrafo anterior Parágrafo anterior Parágrafo anterior Parágrafo anterior Parágrafo anterior Parágrafo</div>
<div class="t" style="top:297.94px;font-size:9.4px;color:#a3a3a3;font-weight:normal;font-family:'Liberation Serif',sans-serif;transform:scaleX(1.0098);transform-origin:0 0;left:349.50px;-webkit-text-stroke:0;">anterior Parágrafo anterior Parágrafo anterior Parágrafo anterior Parágrafo anterior</div>
<div class="t" style="top:337.04px;font-size:9.4px;color:#a3a3a3;font-weight:normal;font-family:'Liberation Serif',sans-serif;transform:scaleX(1.0000);transform-origin:0 0;left:349.50px;-webkit-text-stroke:0;">Parágrafo seguinte Parágrafo seguinte Parágrafo seguinte Parágrafo seguinte Parágrafo seguinte</div>
<div class="t" style="top:347.97px;font-size:9.4px;color:#a3a3a3;font-weight:normal;font-family:'Liberation Serif',sans-serif;transform:scaleX(1.0000);transform-origin:0 0;left:349.50px;-webkit-text-stroke:0;">Parágrafo seguinte Parágrafo seguinte Parágrafo seguinte Parágrafo seguinte Parágrafo seguinte</div>
<div class="t" style="top:358.90px;font-size:9.4px;color:#a3a3a3;font-weight:normal;font-family:'Liberation Serif',sans-serif;transform:scaleX(1.0000);transform-origin:0 0;left:349.50px;-webkit-text-stroke:0;">Parágrafo seguinte Parágrafo seguinte Parágrafo seguinte Parágrafo seguinte Parágrafo seguinte</div>
<div class="t" style="top:369.83px;font-size:9.4px;color:#a3a3a3;font-weight:normal;font-family:'Liberation Serif',sans-serif;transform:scaleX(1.0000);transform-origin:0 0;left:349.50px;-webkit-text-stroke:0;">Parágrafo seguinte Parágrafo seguinte Parágrafo seguinte Parágrafo seguinte Parágrafo seguinte</div>
<div class="r" style="left:332px;top:384px;width:439px;height:40px;background:#f0f0f0;box-sizing:border-box;border:1px solid #cfcfcf;"></div>
<div class="r" style="left:758px;top:385px;width:12px;height:38px;background:#f0f0f0;"></div>
<svg class="r" style="left:760px;top:389px;" width="8" height="5" viewBox="0 0 8 5"><path d="M0.5 4.5 L4 1 L7.5 4.5" fill="none" stroke="#555" stroke-width="1"/></svg>
<div class="r" style="left:759px;top:398px;width:9.5px;height:11px;background:#cdcdcd;"></div>
<svg class="r" style="left:760px;top:414px;" width="8" height="5" viewBox="0 0 8 5"><path d="M0.5 0.5 L4 4 L7.5 0.5" fill="none" stroke="#555" stroke-width="1"/></svg>
<div class="r" style="left:333px;top:390px;width:424px;height:16px;overflow:hidden;"><div class="t" style="right:7px;top:4.9px;font-size:8.6px;color:#1e1e1e;font-family:'Liberation Sans';letter-spacing:-0.28px;">Fonte: (Padrão) Arial, 14 pt, Negrito, Espaço Antes: 12 pt, Depois de: 0 pt, Manter com o próximo, Manter linhas juntas, Nível 1, Estilo: Vinculado, Mostrar na galeria de Estilos,</div></div>
<div class="t" style="top:431.42px;font-size:8.6px;color:#1e1e1e;font-weight:normal;font-family:'Liberation Sans',sans-serif;transform:scaleX(0.9203);transform-origin:0 0;left:339.00px;"><u>A</u>dicionar à galeria de Estilos</div>
<div class="r" style="left:449px;top:430px;width:9px;height:9px;background:#fff;box-sizing:border-box;border:1px solid #333;"></div>
<div class="t" style="top:431.42px;font-size:8.6px;color:#1e1e1e;font-weight:normal;font-family:'Liberation Sans',sans-serif;transform:scaleX(0.9335);transform-origin:0 0;left:461.00px;">At<u>u</u>alizar automaticamente</div>
<svg class="r" style="left:337px;top:443px;" width="10" height="10" viewBox="0 0 10 10"><circle cx="5" cy="5" r="4.4" fill="#fff" stroke="#333" stroke-width="0.9"/><circle cx="5" cy="5" r="2.2" fill="#333"/></svg>
<div class="t" style="top:444.32px;font-size:8.6px;color:#1e1e1e;font-weight:normal;font-family:'Liberation Sans',sans-serif;transform:scaleX(0.8567);transform-origin:0 0;left:349.00px;">Somente neste documento</div>
<svg class="r" style="left:437px;top:443px;" width="10" height="10" viewBox="0 0 10 10"><circle cx="5" cy="5" r="4.4" fill="#fff" stroke="#333" stroke-width="0.9"/></svg>
<div class="t" style="top:444.32px;font-size:8.6px;color:#1e1e1e;font-weight:normal;font-family:'Liberation Sans',sans-serif;transform:scaleX(0.9329);transform-origin:0 0;left:449.00px;">Novos documentos baseados neste modelo</div>
<div class="r" style="left:660.5px;top:461px;width:51px;height:16px;background:#e1e1e1;box-sizing:border-box;border:1px solid #adadad;"></div>
<div class="t" style="top:465.62px;font-size:8.6px;color:#1e1e1e;font-weight:normal;font-family:'Liberation Sans',sans-serif;left:486.00px;width:400px;text-align:center;">OK</div>
<div class="r" style="left:719px;top:461px;width:51px;height:16px;background:#e1e1e1;box-sizing:border-box;border:1px solid #adadad;"></div>
<div class="t" style="top:465.62px;font-size:8.6px;color:#1e1e1e;font-weight:normal;font-family:'Liberation Sans',sans-serif;transform:scaleX(0.8719);transform-origin:0 0;left:729.50px;">Cancelar</div>
<div class="r" style="left:326px;top:462px;width:51px;height:15px;background:#cce4f7;box-sizing:border-box;border:1px solid #3c8ad8;"></div>
<div class="t" style="top:466.12px;font-size:8.6px;color:#1e1e1e;font-weight:normal;font-family:'Liberation Sans',sans-serif;transform:scaleX(0.8749);transform-origin:0 0;left:331.00px;"><u>F</u>ormatar</div>
<svg class="r" style="left:365px;top:468px;" width="5" height="3" viewBox="0 0 5 3"><path d="M0 0 h4.5 l-2.25 2.5z" fill="#222"/></svg>
<div class="r" style="left:326.5px;top:316.5px;width:111px;height:145px;background:#fff;box-sizing:border-box;border:1px solid #c4c4c4;"></div>
<div class="r" style="left:327.5px;top:334px;width:109px;height:14.5px;background:#cce8ff;box-sizing:border-box;border:1px solid #99ccf5;background:#d6e6f7;border-color:#a9c9ee;"></div>
<div class="t" style="top:321.92px;font-size:8.6px;color:#1e1e1e;font-weight:normal;font-family:'Liberation Sans',sans-serif;transform:scaleX(0.9437);transform-origin:0 0;left:350.50px;"><u>F</u>onte...</div>
<div class="t" style="top:337.92px;font-size:8.6px;color:#1e1e1e;font-weight:normal;font-family:'Liberation Sans',sans-serif;transform:scaleX(0.8462);transform-origin:0 0;left:350.50px;"><u>P</u>arágrafo...</div>
<div class="t" style="top:353.92px;font-size:8.6px;color:#1e1e1e;font-weight:normal;font-family:'Liberation Sans',sans-serif;transform:scaleX(0.9168);transform-origin:0 0;left:350.50px;">Tab<u>u</u>lação...</div>
<div class="t" style="top:369.92px;font-size:8.6px;color:#1e1e1e;font-weight:normal;font-family:'Liberation Sans',sans-serif;transform:scaleX(0.8967);transform-origin:0 0;left:350.50px;"><u>B</u>orda...</div>
<div class="t" style="top:385.92px;font-size:8.6px;color:#1e1e1e;font-weight:normal;font-family:'Liberation Sans',sans-serif;transform:scaleX(0.9555);transform-origin:0 0;left:350.50px;"><u>I</u>dioma...</div>
<div class="t" style="top:401.92px;font-size:8.6px;color:#1e1e1e;font-weight:normal;font-family:'Liberation Sans',sans-serif;transform:scaleX(0.8928);transform-origin:0 0;left:350.50px;">Qu<u>a</u>dro...</div>
<div class="t" style="top:417.92px;font-size:8.6px;color:#1e1e1e;font-weight:normal;font-family:'Liberation Sans',sans-serif;transform:scaleX(0.8816);transform-origin:0 0;left:350.50px;"><u>N</u>umeração...</div>
<div class="t" style="top:433.92px;font-size:8.6px;color:#1e1e1e;font-weight:normal;font-family:'Liberation Sans',sans-serif;transform:scaleX(0.9233);transform-origin:0 0;left:350.50px;"><u>T</u>ecla de atalho...</div>
<div class="t" style="top:449.92px;font-size:8.6px;color:#1e1e1e;font-weight:normal;font-family:'Liberation Sans',sans-serif;transform:scaleX(0.9590);transform-origin:0 0;left:350.50px;"><u>E</u>feitos do Texto</div>
<svg class="r" style="left:380px;top:322px;" width="104" height="84" viewBox="0 0 104 84"><g transform="translate(8,8)"><path d="M7,16.6 A3.2,3.2 0 0 1 11.5,12.1 L30,30.6 L31.1,20.9 A3.3,3.3 0 0 1 36.7,18.6 L42.8,24.7 L43,17.1 A3.3,3.3 0 0 1 48.6,14.8 L56.7,22.9 L56.6,14.8 A3.3,3.3 0 0 1 62.2,12.5 L80.7,31.7 Q85.5,37 86,45.3 L64.4,67.9 Q44,62.5 24.2,56 A2.4,2.4 0 0 1 23.5,51.2 L40,50.5 Z" fill="#fff" stroke="#fff" stroke-width="7" stroke-linejoin="round"/><path d="M7,16.6 A3.2,3.2 0 0 1 11.5,12.1 L30,30.6 L31.1,20.9 A3.3,3.3 0 0 1 36.7,18.6 L42.8,24.7 L43,17.1 A3.3,3.3 0 0 1 48.6,14.8 L56.7,22.9 L56.6,14.8 A3.3,3.3 0 0 1 62.2,12.5 L80.7,31.7 Q85.5,37 86,45.3 L64.4,67.9 Q44,62.5 24.2,56 A2.4,2.4 0 0 1 23.5,51.2 L40,50.5 Z" fill="#1f1f1f"/></g></svg>
<svg class="r" style="left:364.3px;top:456.9px;" width="104" height="84" viewBox="0 0 104 84"><g transform="translate(8,8)"><path d="M7,16.6 A3.2,3.2 0 0 1 11.5,12.1 L30,30.6 L31.1,20.9 A3.3,3.3 0 0 1 36.7,18.6 L42.8,24.7 L43,17.1 A3.3,3.3 0 0 1 48.6,14.8 L56.7,22.9 L56.6,14.8 A3.3,3.3 0 0 1 62.2,12.5 L80.7,31.7 Q85.5,37 86,45.3 L64.4,67.9 Q44,62.5 24.2,56 A2.4,2.4 0 0 1 23.5,51.2 L40,50.5 Z" fill="#fff" stroke="#fff" stroke-width="7" stroke-linejoin="round"/><path d="M7,16.6 A3.2,3.2 0 0 1 11.5,12.1 L30,30.6 L31.1,20.9 A3.3,3.3 0 0 1 36.7,18.6 L42.8,24.7 L43,17.1 A3.3,3.3 0 0 1 48.6,14.8 L56.7,22.9 L56.6,14.8 A3.3,3.3 0 0 1 62.2,12.5 L80.7,31.7 Q85.5,37 86,45.3 L64.4,67.9 Q44,62.5 24.2,56 A2.4,2.4 0 0 1 23.5,51.2 L40,50.5 Z" fill="#1f1f1f"/></g></svg>
</body></html>
